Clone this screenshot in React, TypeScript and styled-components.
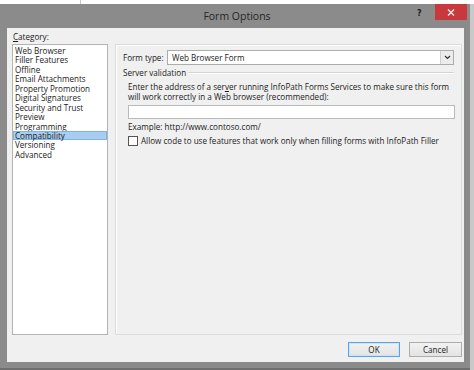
import React from "react";
import styled, { createGlobalStyle } from "styled-components";

const GlobalStyle = createGlobalStyle`
  html, body { margin: 0; padding: 0; background: #ffffff; }
  body { font-family: "Open Sans", "Noto Sans", sans-serif; }
  * { box-sizing: border-box; }
`;

const Page = styled.div`
  width: 474px;
  height: 370px;
  display: flex;
  flex-direction: column;
  background: #c9c9c9;
  overflow: hidden;
`;

const TopStrip = styled.div`
  height: 4px;
  background: #ffffff;
  display: flex;
`;

const GridLine = styled.div`
  margin-left: 80px;
  width: 1px;
  height: 4px;
  background: #c8c8c8;
`;

const Window = styled.div`
  width: 470px;
  flex: 1;
  display: flex;
  flex-direction: column;
  background: #8b8b8b;
  padding: 0 6px 6px 7px;
  border-bottom: 2px solid #6f6f6f;
`;

const TitleBar = styled.div`
  height: 24px;
  display: flex;
  align-items: flex-start;
  margin-right: -3px;
  position: relative;
`;

const Title = styled.div`
  position: absolute;
  left: 0;
  right: 0;
  top: 5px;
  text-align: center;
  font-size: 10.5px;
  color: #262626;
  pointer-events: none;
`;

const TitleSpacer = styled.div`
  flex: 1;
`;

const HelpGlyph = styled.div`
  width: 18px;
  height: 16px;
  margin-top: 2px;
  font-family: "DejaVu Sans", sans-serif;
  font-weight: bold;
  font-size: 8px;
  color: #1a1a1a;
  line-height: 16px;
  text-align: left;
`;

const CloseButton = styled.div`
  width: 32px;
  height: 16px;
  background: #c7393d;
  color: #f3d6d6;
  display: flex;
  align-items: center;
  justify-content: center;
`;

const Content = styled.div`
  flex: 1;
  background: #f0f0f0;
  display: flex;
  flex-direction: column;
  padding: 4px 2px 5px 5px;
  font-size: 8.1px;
  color: #1a1a1a;
`;

const Columns = styled.div`
  display: flex;
  gap: 7px;
`;

const LeftCol = styled.div`
  width: 96px;
  display: flex;
  flex-direction: column;
`;

const Label = styled.div`
  height: 12px;
  line-height: 10px;
  padding-left: 1px;
`;

const ListBox = styled.div`
  height: 291px;
  background: #ffffff;
  border: 1px solid #b4b4b4;
  padding: 1px 0 0 0;
  display: flex;
  flex-direction: column;
`;

const ListItem = styled.div<{ $selected?: boolean }>`
  height: 9.45px;
  line-height: 9.45px;
  padding-left: 2px;
  white-space: nowrap;
  background: ${(p) => (p.$selected ? "#a9cdf0" : "transparent")};
  box-shadow: ${(p) => (p.$selected ? "inset 0 0 0 1px #7fb3e6" : "none")};
`;

const Panel = styled.div`
  flex: 1;
  margin-top: 12px;
  height: 291px;
  border: 1px solid #dcdcdc;
  box-shadow: inset 1px 1px 0 #ffffff;
  padding: 5px 7px 0 6px;
  display: flex;
  flex-direction: column;
`;

const Row = styled.div`
  display: flex;
  align-items: center;
`;

const FieldLabel = styled.div`
  width: 45px;
  padding-left: 1px;
`;

const Combo = styled.div`
  flex: 1;
  height: 15px;
  background: #ffffff;
  border: 1px solid #acacac;
  display: flex;
  align-items: center;
  padding-left: 4px;
`;

const ComboText = styled.div`
  flex: 1;
`;

const DropButton = styled.div`
  width: 13px;
  height: 13px;
  border-left: 1px solid #cfcfcf;
  background: #ececec;
  display: flex;
  align-items: center;
  justify-content: center;
`;

const GroupHeader = styled.div`
  display: flex;
  align-items: center;
  gap: 2px;
  margin-top: 2px;
  height: 10px;
  padding-left: 1px;
`;

const GroupLine = styled.div`
  flex: 1;
  height: 1px;
  background: #d5d5d5;
  box-shadow: 0 1px 0 #ffffff;
`;

const GroupBody = styled.div`
  padding-left: 6px;
  padding-top: 5px;
  display: flex;
  flex-direction: column;
`;

const Paragraph = styled.div`
  line-height: 9.5px;
  white-space: nowrap;
`;

const TextBox = styled.div`
  margin-top: 4px;
  height: 14px;
  margin-right: -1px;
  background: #ffffff;
  border: 1px solid #b9b9b9;
`;

const Example = styled.div`
  margin-top: 3px;
  line-height: 10px;
`;

const CheckRow = styled.div`
  display: flex;
  align-items: center;
  gap: 3px;
  margin-top: 3px;
  white-space: nowrap;
`;

const CheckBox = styled.div`
  width: 10px;
  height: 10px;
  background: #ffffff;
  border: 1px solid #555555;
`;

const Footer = styled.div`
  display: flex;
  justify-content: flex-end;
  gap: 9px;
  padding-top: 7px;
`;

const Button = styled.div<{ $default?: boolean; $w: number }>`
  width: ${(p) => p.$w}px;
  height: 15px;
  display: flex;
  align-items: center;
  justify-content: center;
  background: linear-gradient(#f2f2f2, #e3e3e3);
  border: 1px solid ${(p) => (p.$default ? "#5aa3e6" : "#adadad")};
  box-shadow: ${(p) => (p.$default ? "inset 0 0 0 1px #cde4f7" : "none")};
`;

const U = styled.span`
  text-decoration: underline;
`;

const categories = [
  "Web Browser",
  "Filler Features",
  "Offline",
  "Email Attachments",
  "Property Promotion",
  "Digital Signatures",
  "Security and Trust",
  "Preview",
  "Programming",
  "Compatibility",
  "Versioning",
  "Advanced",
];

export default function App() {
  return (
    <>
      <GlobalStyle />
      <Page>
        <TopStrip>
          <GridLine />
        </TopStrip>
        <Window>
          <TitleBar>
            <Title>Form Options</Title>
            <TitleSpacer />
            <HelpGlyph>?</HelpGlyph>
            <CloseButton>
              <svg width="8" height="7" viewBox="0 0 8 7">
                <path d="M1 0.5 L7 6.5 M7 0.5 L1 6.5" stroke="#f6dede" strokeWidth="1.5" />
              </svg>
            </CloseButton>
          </TitleBar>
          <Content>
            <Columns>
              <LeftCol>
                <Label>
                  <U>C</U>ategory:
                </Label>
                <ListBox>
                  {categories.map((c) => (
                    <ListItem key={c} $selected={c === "Compatibility"}>
                      {c}
                    </ListItem>
                  ))}
                </ListBox>
              </LeftCol>
              <Panel>
                <Row>
                  <FieldLabel>Form type:</FieldLabel>
                  <Combo>
                    <ComboText>Web Browser Form</ComboText>
                    <DropButton>
                      <svg width="7" height="5" viewBox="0 0 7 5">
                        <path d="M1 1 L3.5 3.5 L6 1" stroke="#333" strokeWidth="1.2" fill="none" />
                      </svg>
                    </DropButton>
                  </Combo>
                </Row>
                <GroupHeader>
                  <span>Server validation</span>
                  <GroupLine />
                </GroupHeader>
                <GroupBody>
                  <Paragraph>
                    Enter the address of a ser<U>v</U>er running InfoPath Forms Services to make sure this form
                    <br />
                    will work correctly in a Web browser (recommended):
                  </Paragraph>
                  <TextBox />
                  <Example>Example: http://www.contoso.com/</Example>
                  <CheckRow>
                    <CheckBox />
                    <span>Allow code to use features that work only when filling forms with InfoPath Filler</span>
                  </CheckRow>
                </GroupBody>
              </Panel>
            </Columns>
            <Footer>
              <Button $default $w={52}>OK</Button>
              <Button $w={53}>Cancel</Button>
            </Footer>
          </Content>
        </Window>
      </Page>
    </>
  );
}
